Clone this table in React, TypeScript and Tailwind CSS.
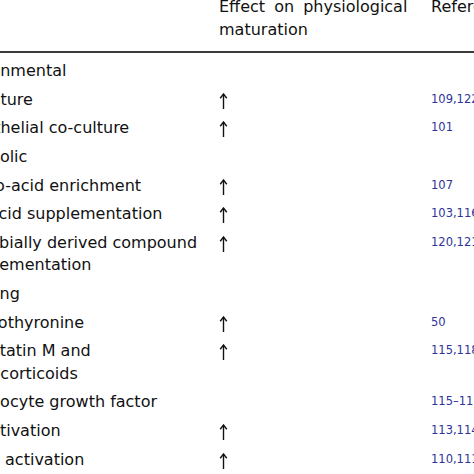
import React from 'react';

type Line = [string, string];

interface Row {
  label: Line[];
  up?: boolean;
  refs?: string;
  first?: boolean;
}

const rows: Row[] = [
  { label: [['Environmental', 'pl-[6px]']], first: true },
  { label: [['Co-culture', 'pl-[6px]']], up: true, refs: '109,122' },
  { label: [['Endothelial co-culture', 'pl-[10px]']], up: true, refs: '101' },
  { label: [['Metabolic', 'pl-[6px]']] },
  { label: [['Amino-acid enrichment', 'pl-[10px]']], up: true, refs: '107' },
  { label: [['Fatty acid supplementation', 'pl-0']], up: true, refs: '103,116' },
  {
    label: [
      ['Microbially derived compound', 'pl-[12px]'],
      ['supplementation', 'pl-[12px]'],
    ],
    up: true,
    refs: '120,121',
  },
  { label: [['Signaling', 'pl-[2px]']] },
  { label: [['Triiodothyronine', 'pl-[11px]']], up: true, refs: '50' },
  {
    label: [
      ['Oncostatin M and', 'pl-[6px]'],
      ['glucocorticoids', 'pl-[13px]'],
    ],
    up: true,
    refs: '115,118',
  },
  { label: [['Hepatocyte growth factor', 'pl-[8px]']], refs: '115–117' },
  { label: [['Wnt activation', 'pl-0']], up: true, refs: '113,114' },
  { label: [['Notch activation', 'pl-[9px]']], up: true, refs: '110,111' },
];

const UpArrow = () => (
  <svg width="9" height="16" viewBox="0 0 9 16" className="mt-[4px] block">
    <path d="M4.5 1.2 V16" stroke="#111" strokeWidth="1.4" fill="none" />
    <path d="M1.2 5.2 L4.5 1 L7.8 5.2" stroke="#111" strokeWidth="1.4" fill="none" strokeLinejoin="miter" />
  </svg>
);

export default function App() {
  return (
    <div className="w-[474px] h-[474px] overflow-hidden bg-white text-[#111] font-['DejaVu_Sans',sans-serif]">
      <table className="table-fixed border-collapse ml-[-56px] mt-[-4px] w-[604px] text-[16px] leading-[22.6px]">
        <colgroup>
          <col className="w-[268px]" />
          <col className="w-[212px]" />
          <col className="w-[124px]" />
        </colgroup>
        <thead>
          <tr className="border-b-2 border-[#3a3a3a]">
            <th className="text-left font-normal align-top pb-[10px]"></th>
            <th className="text-left font-normal align-top pl-[7px] pr-[2px] pb-[10px] [word-spacing:4px]">
              Effect on physiological maturation
            </th>
            <th className="text-left font-normal align-top pl-[7px] pb-[10px] whitespace-nowrap">Reference(s)</th>
          </tr>
        </thead>
        <tbody>
          {rows.map((r, i) => (
            <tr key={i}>
              <td className={`align-top pr-[4px] ${r.first ? 'pt-[7px]' : 'pt-[3px]'} pb-[3px]`}>
                {r.label.map(([text, pad], j) => (
                  <div key={j} className={`whitespace-nowrap ${pad}`}>
                    {text}
                  </div>
                ))}
              </td>
              <td className={`align-top pl-[7px] ${r.first ? 'pt-[7px]' : 'pt-[3px]'} pb-[3px]`}>
                {r.up && <UpArrow />}
              </td>
              <td className={`align-top pl-[7px] ${r.first ? 'pt-[7px]' : 'pt-[3px]'} pb-[3px]`}>
                {r.refs && (
                  <div className="text-[11.5px] leading-[14px] pt-[3px] text-[#2d3499] whitespace-nowrap">{r.refs}</div>
                )}
              </td>
            </tr>
          ))}
        </tbody>
      </table>
    </div>
  );
}
